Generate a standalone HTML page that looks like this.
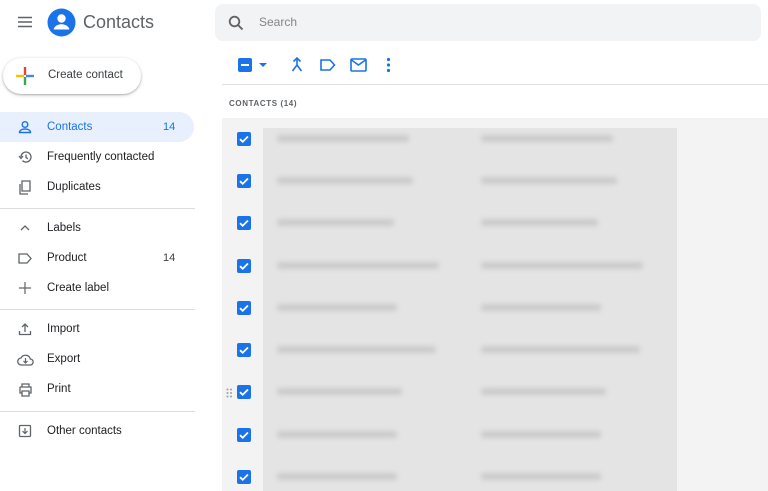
<!DOCTYPE html>
<html><head><style>
*{margin:0;padding:0;box-sizing:border-box}
body{width:768px;height:491px;overflow:hidden;background:#fff;font-family:"Liberation Sans",sans-serif;position:relative;color:#3c4043}
.a{position:absolute}
.nav{position:absolute;left:47px;font-size:11.5px;color:#202124;font-weight:500}
.ic{position:absolute;left:18px}
.hr{position:absolute;left:0;width:195px;height:1px;background:#dadce0}
.cb{position:absolute;left:237px;width:14px;height:14px;background:#1a73e8;border-radius:2px}
.bar{position:absolute;height:7px;background:#cbcbcb;border-radius:3px;filter:blur(2.5px)}
</style></head><body>
<svg class="a" style="left:17px;top:16px" width="16" height="12"><path d="M1 1.5h14M1 6h14M1 10.5h14" stroke="#5f6368" stroke-width="1.6"/></svg>
<svg class="a" style="left:47px;top:8px" width="29" height="29" viewBox="0 0 29 29"><circle cx="14.5" cy="14.5" r="14" fill="#1a73e8"/><circle cx="14.5" cy="10.5" r="4.2" fill="#fff"/><path d="M6.8 20.5c1.5-3 4.5-4.3 7.7-4.3s6.2 1.3 7.7 4.3v1h-15.4z" fill="#fff"/></svg>
<div class="a" style="left:83px;top:12px;font-size:18px;color:#5f6368">Contacts</div>
<div class="a" style="left:215px;top:4px;width:546px;height:37px;background:#f1f3f4;border-radius:8px"></div>
<svg class="a" style="left:228px;top:15px" width="16" height="16"><circle cx="6.5" cy="6.5" r="4.8" fill="none" stroke="#5f6368" stroke-width="1.8"/><path d="M10 10l4.5 4.5" stroke="#5f6368" stroke-width="1.9"/></svg>
<div class="a" style="left:259px;top:15px;font-size:12px;color:#80868b">Search</div>
<div class="a" style="left:3px;top:58px;width:138px;height:36px;border-radius:18px;background:#fff;box-shadow:0 1px 3px rgba(60,64,67,.35),0 1px 1px rgba(60,64,67,.15)"></div>
<svg class="a" style="left:15px;top:66px" width="20" height="20"><path d="M10 1v8" stroke="#ea4335" stroke-width="2.4"/><path d="M11 10h8" stroke="#4285f4" stroke-width="2.4"/><path d="M10 11v8" stroke="#34a853" stroke-width="2.4"/><path d="M1 10h8" stroke="#fbbc04" stroke-width="2.4"/></svg>
<div class="a" style="left:48px;top:69px;font-size:11.5px;color:#3c4043;font-weight:500">Create contact</div>
<div class="a" style="left:238px;top:58px;width:14px;height:14px;background:#1a73e8;border-radius:2px"><div style="position:absolute;left:3px;top:6px;width:8px;height:2px;background:#fff"></div></div>
<svg class="a" style="left:258px;top:62px" width="10" height="6"><path d="M1 1h8L5 5z" fill="#1a73e8"/></svg>
<svg class="a" style="left:290px;top:57px" width="14" height="16"><path d="M7 2v6M3.5 4.5L7 1l3.5 3.5M7 8L2.5 14M7 8l4.5 6" stroke="#1a73e8" stroke-width="1.6" fill="none"/></svg>
<svg class="a" style="left:319px;top:58px" width="18" height="14"><path d="M2 2h9l4.5 5-4.5 5H2z" stroke="#1a73e8" stroke-width="1.6" fill="none"/></svg>
<svg class="a" style="left:350px;top:58px" width="17" height="14"><rect x="1" y="1" width="15" height="12" rx="1" stroke="#1a73e8" stroke-width="1.6" fill="none"/><path d="M1.5 2l7 5 7-5" stroke="#1a73e8" stroke-width="1.6" fill="none"/></svg>
<svg class="a" style="left:386px;top:57px" width="5" height="16"><circle cx="2.5" cy="2.5" r="1.6" fill="#1a73e8"/><circle cx="2.5" cy="8" r="1.6" fill="#1a73e8"/><circle cx="2.5" cy="13.5" r="1.6" fill="#1a73e8"/></svg>
<div class="a" style="left:222px;top:84px;width:546px;height:1px;background:#e0e0e0"></div>
<div class="a" style="left:229px;top:99px;font-size:8px;color:#5f6368;letter-spacing:.6px;font-weight:bold">CONTACTS (14)</div>
<div class="a" style="left:0;top:112px;width:194px;height:30px;background:#e8f0fe;border-radius:0 15px 15px 0"></div>
<svg class="ic" style="top:120px" width="14" height="14"><circle cx="7" cy="4.5" r="2.8" fill="none" stroke="#1a73e8" stroke-width="1.4"/><path d="M1.5 12.5c0-2.5 3-3.5 5.5-3.5s5.5 1 5.5 3.5z" fill="none" stroke="#1a73e8" stroke-width="1.4"/></svg>
<div class="nav" style="top:121px;color:#1a73e8">Contacts</div><div class="a" style="left:163px;top:121px;font-size:11px;color:#1a73e8;font-weight:500">14</div>
<svg class="ic" style="top:150px" width="15" height="14"><path d="M3 7a5 5 0 1 1 1.5 3.6" fill="none" stroke="#5f6368" stroke-width="1.3"/><path d="M1 6l2 2.5L5 6" fill="none" stroke="#5f6368" stroke-width="1.3"/><path d="M8 4.5V7.5l2 1.3" fill="none" stroke="#5f6368" stroke-width="1.3"/></svg>
<div class="nav" style="top:151px">Frequently contacted</div>
<svg class="ic" style="top:180px" width="14" height="15"><path d="M4 1h8v10H4z M2 4v10h8" fill="none" stroke="#5f6368" stroke-width="1.3"/></svg>
<div class="nav" style="top:181px">Duplicates</div>
<div class="hr" style="top:208px"></div>
<svg class="ic" style="top:224px;left:20px" width="10" height="7"><path d="M1 6l4-4 4 4" fill="none" stroke="#5f6368" stroke-width="1.3"/></svg>
<div class="nav" style="top:222px">Labels</div>
<svg class="ic" style="top:253px" width="15" height="11"><path d="M1 1h8l4 4.5-4 4.5H1z" fill="none" stroke="#5f6368" stroke-width="1.3"/></svg>
<div class="nav" style="top:252px">Product</div><div class="a" style="left:163px;top:252px;font-size:11px;color:#3c4043">14</div>
<svg class="ic" style="top:282px;left:19px" width="12" height="12"><path d="M6 0v12M0 6h12" stroke="#5f6368" stroke-width="1.2"/></svg>
<div class="nav" style="top:282px">Create label</div>
<div class="hr" style="top:309px"></div>
<svg class="ic" style="top:322px" width="14" height="14"><path d="M7 10V2M4 5l3-3 3 3M1.5 9v3.5h11V9" fill="none" stroke="#5f6368" stroke-width="1.3"/></svg>
<div class="nav" style="top:323px">Import</div>
<svg class="ic" style="top:353px;left:17px" width="17" height="13"><path d="M4.5 12h8.5a3 3 0 0 0 .3-6A5 5 0 0 0 4 5a3.5 3.5 0 0 0 .5 7z" fill="none" stroke="#5f6368" stroke-width="1.3"/><path d="M8.5 5v5M6.5 8l2 2 2-2" fill="none" stroke="#5f6368" stroke-width="1.2"/></svg>
<div class="nav" style="top:353px">Export</div>
<svg class="ic" style="top:383px" width="15" height="14"><path d="M4 4V1h7v3M2 4h11v6h-2M4 10H2V4M4 8h7v5H4z" fill="none" stroke="#5f6368" stroke-width="1.3"/></svg>
<div class="nav" style="top:383px">Print</div>
<div class="hr" style="top:411px"></div>
<svg class="ic" style="top:424px" width="14" height="14"><rect x="1.5" y="1.5" width="11" height="11" rx="1" fill="none" stroke="#5f6368" stroke-width="1.3"/><path d="M7 4v5M4.5 7L7 9.5 9.5 7" fill="none" stroke="#5f6368" stroke-width="1.2"/></svg>
<div class="nav" style="top:425px">Other contacts</div>
<div class="a" style="left:222px;top:118px;width:546px;height:373px;background:#f3f3f3"></div>
<div class="a" style="left:263px;top:128px;width:414px;height:363px;background:#e4e4e4"></div>
<svg class="a" style="left:226px;top:388px" width="7" height="10"><g fill="#9aa0a6"><circle cx="1.5" cy="1.5" r="1"/><circle cx="5" cy="1.5" r="1"/><circle cx="1.5" cy="5" r="1"/><circle cx="5" cy="5" r="1"/><circle cx="1.5" cy="8.5" r="1"/><circle cx="5" cy="8.5" r="1"/></g></svg>
<div id="rows"></div>
<script>
var ys=[139,181,223,266,308,350,392,435,477],w1=[132,136,117,162,120,159,125,120,120],w2=[132,136,117,162,120,159,125,120,120],h='';
ys.forEach(function(y,i){h+='<div class="cb" style="top:'+(y-7)+'px"><svg width="14" height="14"><path d="M3 7.2l2.7 2.6L11 4.5" fill="none" stroke="#fff" stroke-width="1.8"/></svg></div>';
h+='<div class="bar" style="left:277px;top:'+(y-4)+'px;width:'+w1[i]+'px"></div><div class="bar" style="left:481px;top:'+(y-4)+'px;width:'+w2[i]+'px"></div>';});
document.getElementById('rows').innerHTML=h;
</script>
</body></html>
